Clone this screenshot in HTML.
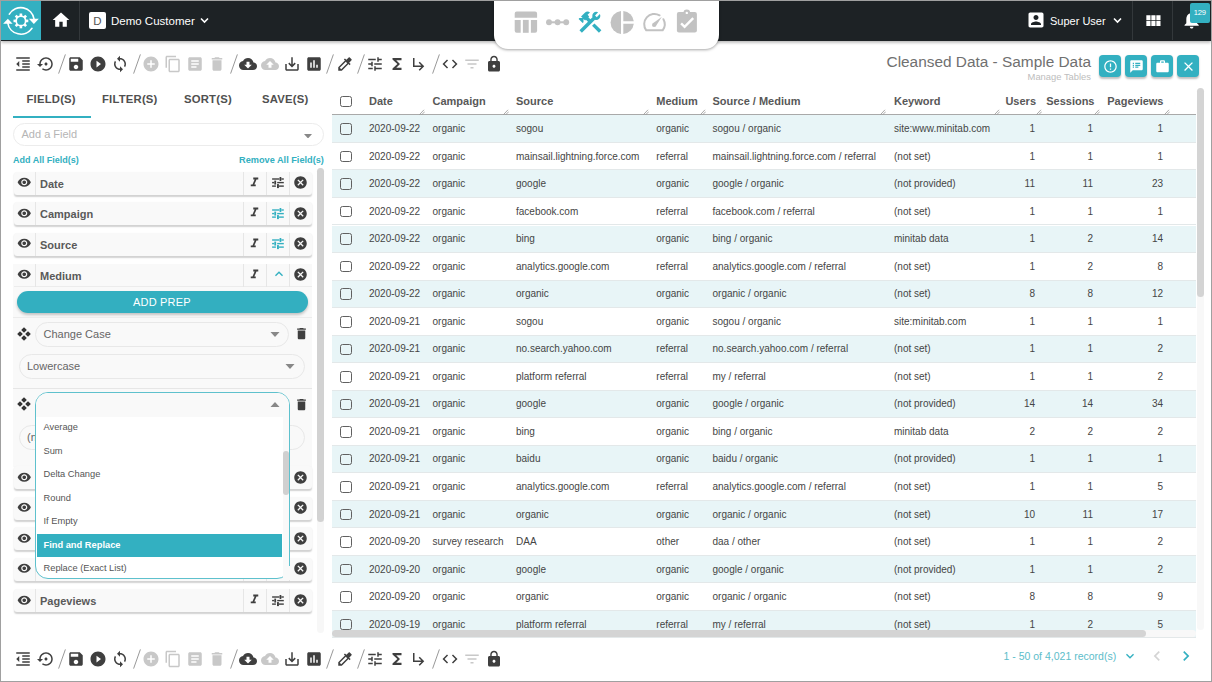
<!DOCTYPE html><html><head><meta charset="utf-8"><style>
*{box-sizing:border-box;margin:0;padding:0}
html,body{width:1212px;height:682px;overflow:hidden;background:#fff}
body{font-family:"Liberation Sans",sans-serif;position:relative;color:#444}
.frame{position:absolute;left:0;top:0;width:1212px;height:682px;border:1px solid #a0a0a0;z-index:50;pointer-events:none}
.abs{position:absolute}
.ic{position:absolute;display:block}
.slash{position:absolute;width:8px;height:20px;background:linear-gradient(to top right,transparent calc(50% - 0.6px),#8a8a8a calc(50% - 0.3px),#8a8a8a calc(50% + 0.3px),transparent calc(50% + 0.6px))}
.hdr{position:absolute;left:1px;top:1px;width:1210px;height:39.5px;background:#1d2225;box-shadow:0 1.5px 3px rgba(0,0,0,0.3)}
.txt{position:absolute;white-space:nowrap;line-height:1}
.row{position:absolute;left:332px;width:864px;height:27.5px;border-bottom:1px solid #e3e8e9}
.row.s{background:#e8f5f7}
.cb{position:absolute;left:340px;width:11.5px;height:11.5px;border:1.8px solid #606060;border-radius:2.5px}
.cell{position:absolute;white-space:nowrap;font-size:10px;color:#454545;line-height:1}
.hcell{position:absolute;white-space:nowrap;font-size:11px;font-weight:bold;color:#585858;line-height:1;top:96px}
.handle{position:absolute;top:109px;width:5px;height:5px;background:linear-gradient(to top right,transparent 35%,#999 40%,transparent 50%,transparent 60%,#999 65%,transparent 72%)}
.card{position:absolute;left:14px;width:297.5px;height:23px;background:#f9f9f9;border-radius:3px;box-shadow:0 1.5px 1.5px rgba(0,0,0,0.18)}
.vd{position:absolute;top:0;width:1px;height:23px;background:#e6e6e6}
.fname{position:absolute;left:26px;top:7px;font-size:11px;font-weight:bold;color:#5a5a5a;line-height:1;white-space:nowrap}
.tbtn{position:absolute;top:55px;width:22px;height:22px;background:#33b0c1;border-radius:4px;box-shadow:0 1.5px 2px rgba(0,0,0,0.25)}
.sel{position:absolute;border:1px solid #e8e8e8;border-radius:13px;background:#f9f9f9}
.dd{position:absolute;font-size:9.3px;color:#555;white-space:nowrap;line-height:1}
</style></head><body>
<div class="frame"></div>
<div class="hdr"></div><div class="abs" style="left:1px;top:1px;width:40px;height:39px;background:#33b0c1"></div><svg class="ic" style="left:0px;top:0px;width:40px;height:40px" viewBox="0 0 40 40">
<g fill="none" stroke="#fff" stroke-width="1.6" stroke-linecap="round">
<path d="M9.34 14.2 A13.35 13.35 0 0 1 34.05 19"/>
<path d="M32.0 28.3 A13.35 13.35 0 0 1 7.75 22.8"/>
</g>
<path fill="#fff" d="M28.9 18.8 L38.8 18.8 L33.85 24 Z"/>
<path fill="#fff" d="M3.1 23.7 L12.6 23.7 L7.85 18.8 Z"/>
<g transform="translate(20.9 20.9)" fill="#fff">
<circle r="5.6"/>
<g id="t"><rect x="-1.3" y="-7.4" width="2.6" height="3"/></g>
<rect x="-1.3" y="-7.4" width="2.6" height="3" transform="rotate(45)"/>
<rect x="-1.3" y="-7.4" width="2.6" height="3" transform="rotate(90)"/>
<rect x="-1.3" y="-7.4" width="2.6" height="3" transform="rotate(135)"/>
<rect x="-1.3" y="-7.4" width="2.6" height="3" transform="rotate(180)"/>
<rect x="-1.3" y="-7.4" width="2.6" height="3" transform="rotate(225)"/>
<rect x="-1.3" y="-7.4" width="2.6" height="3" transform="rotate(270)"/>
<rect x="-1.3" y="-7.4" width="2.6" height="3" transform="rotate(315)"/>
<circle r="3.9" fill="#33b0c1"/>
</g></svg><svg class="ic" style="left:50.6px;top:10px;width:20px;height:20px" viewBox="0 0 24 24"><path fill="#fff" d="M10 20v-6h4v6h5v-8h3L12 3 2 12h3v8z"/></svg><div class="abs" style="left:79px;top:1px;width:1px;height:39px;background:#33383b"></div><div class="abs" style="left:89px;top:12px;width:17px;height:17px;background:#fff;border-radius:2px"></div><div class="txt" style="left:93.3px;top:15.6px;font-size:11.5px;color:#555">D</div><div class="txt" style="left:111px;top:15.6px;font-size:11.5px;color:#fff">Demo Customer</div><svg class="ic" style="left:200px;top:17px;width:9px;height:7px" viewBox="0 0 9 7"><path d="M1 1.5 L4.5 5 L8 1.5" fill="none" stroke="#fff" stroke-width="1.6"/></svg><div class="abs" style="left:493.8px;top:0px;width:225px;height:48.6px;background:#fff;border-radius:0 0 14px 14px;box-shadow:0 1px 3px rgba(0,0,0,0.35)"></div><svg class="ic" style="left:494px;top:0;width:224px;height:48px" viewBox="0 0 224 48">
<g fill="#c2c2c2">
<path d="M20.7 13.5 a2 2 0 0 1 2 -2 h18.4 a2 2 0 0 1 2 2 v4.3 h-22.4z"/>
<path d="M20.7 19.9 h6 v12.9 h-4 a2 2 0 0 1 -2 -2z"/>
<rect x="28.9" y="19.9" width="5.8" height="12.9"/>
<path d="M36.9 19.9 h6.2 v10.9 a2 2 0 0 1 -2 2 h-4.2z"/>
<circle cx="55" cy="22.3" r="2.95"/><circle cx="63.6" cy="22.3" r="2.95"/><circle cx="72.2" cy="22.3" r="2.95"/>
<rect x="55" y="21.3" width="17" height="2"/>
<path d="M127 11.1 v22.9 a11.5 11.5 0 0 1 0 -22.9z"/>
<path d="M129.3 11.1 a11.5 11.5 0 0 1 10.5 10.2 h-10.5z"/>
<path d="M129.3 23.8 h10.5 a11.5 11.5 0 0 1 -10.5 10.2z"/>
<path d="M184.9 11.9 h16 a2 2 0 0 1 2 2 v16.6 a2 2 0 0 1 -2 2 h-16 a2 2 0 0 1 -2 -2 v-16.6 a2 2 0 0 1 2 -2z"/>
<circle cx="192.8" cy="12.9" r="3.3"/>
<path d="M158.6 23.6 L167.9 16.8 L161.6 26.4 z"/>
<circle cx="160.1" cy="25" r="2.1"/>
</g>
<circle cx="192.8" cy="12.9" r="1.2" fill="#fff"/>
<path d="M187.1 23.3 L190.6 26.8 L199.2 18.1" fill="none" stroke="#fff" stroke-width="2.4"/>
<path d="M165.575 15.27 A10.25 10.25 0 0 0 152.25 30.3 L168.65 30.3 A10.25 10.25 0 0 0 169.41 19.18" fill="none" stroke="#c2c2c2" stroke-width="2" stroke-linecap="round" stroke-linejoin="round"/>
<g transform="translate(82.185 8.41) scale(1.15)"><path fill="#33b0c1" d="M13.78 15.17l2.12-2.12 6.01 6.01-2.12 2.12zM17.5 10c1.93 0 3.5-1.57 3.5-3.5 0-.58-.16-1.12-.41-1.6l-2.7 2.7-1.49-1.49 2.7-2.7c-.48-.25-1.02-.41-1.6-.41C15.57 3 14 4.57 14 6.5c0 .41.08.8.21 1.16l-1.85 1.85-1.78-1.78.71-.71-1.41-1.41L12 3.49c-1.17-1.17-3.07-1.17-4.24 0L4.22 7.03l1.41 1.41H2.81l-.71.71 3.54 3.54.71-.71V9.15l1.41 1.41.71-.71 1.78 1.78-7.41 7.41 2.12 2.12L16.34 9.79c.36.13.75.21 1.16.21z"/></g>
</svg><svg class="ic" style="left:1026.1px;top:10.4px;width:20px;height:20px" viewBox="0 0 24 24"><path fill="#fff" d="M3 5v14c0 1.1.89 2 2 2h14c1.1 0 2-.9 2-2V5c0-1.1-.9-2-2-2H5c-1.11 0-2 .9-2 2zm12 4c0 1.66-1.34 3-3 3s-3-1.34-3-3 1.34-3 3-3 3 1.34 3 3zm-9 8c0-2 4-3.1 6-3.1s6 1.1 6 3.1v1H6v-1z"/></svg><div class="txt" style="left:1050px;top:15.5px;font-size:11px;color:#fff">Super User</div><svg class="ic" style="left:1113px;top:17px;width:9px;height:7px" viewBox="0 0 9 7"><path d="M1 1.5 L4.5 5 L8 1.5" fill="none" stroke="#fff" stroke-width="1.6"/></svg><div class="abs" style="left:1132px;top:1px;width:1px;height:39px;background:#33383b"></div><svg class="ic" style="left:1142.7px;top:10.8px;width:20px;height:20px" viewBox="0 0 24 24"><path fill="#fff" d="M4 11h5V5H4v6zm0 7h5v-6H4v6zm6 0h5v-6h-5v6zm6 0h5v-6h-5v6zm-6-7h5V5h-5v6zm6-6v6h5V5h-5z"/></svg><div class="abs" style="left:1172px;top:1px;width:1px;height:39px;background:#33383b"></div><svg class="ic" style="left:1181.25px;top:9px;width:21.3px;height:21.3px" viewBox="0 0 24 24"><path fill="#fff" d="M12 22c1.1 0 2-.9 2-2h-4c0 1.1.89 2 2 2zm6-6v-5c0-3.07-1.64-5.64-4.5-6.32V4c0-.83-.67-1.5-1.5-1.5s-1.5.67-1.5 1.5v.68C7.63 5.36 6 7.92 6 11v5l-2 2v1h16v-1l-2-2z"/></svg><div class="abs" style="left:1189.5px;top:3px;width:20.5px;height:19.5px;background:#33b0c1;border-radius:2px"></div><div class="txt" style="left:1193.8px;top:9.3px;font-size:7.6px;color:#fff;letter-spacing:-0.2px">129</div><svg class="ic" style="left:14px;top:55px;width:18px;height:18px" viewBox="0 0 24 24"><path fill="#3f3f3f" d="M11 17h10v-2H11v2zm-8-5l4 4V8l-4 4zm0 9h18v-2H3v2zM3 3v2h18V3H3zm8 6h10V7H11v2zm0 4h10v-2H11v2z"/></svg><svg class="ic" style="left:36.5px;top:55px;width:18px;height:18px" viewBox="0 0 24 24"><path fill="#3f3f3f" d="M14 12c0-1.1-.9-2-2-2s-2 .9-2 2 .9 2 2 2 2-.9 2-2zm-2-9c-4.97 0-9 4.03-9 9H0l4 4 4-4H5c0-3.87 3.13-7 7-7s7 3.13 7 7-3.13 7-7 7c-1.51 0-2.91-.49-4.06-1.3l-1.42 1.44C8.04 20.3 9.94 21 12 21c4.97 0 9-4.03 9-9s-4.03-9-9-9z"/></svg><svg class="ic" style="left:57.5px;top:54px;width:8px;height:20px" viewBox="0 0 8 20"><path d="M0.6 19.6 L7.4 0.4" stroke="#8c8c8c" stroke-width="0.9" fill="none"/></svg><svg class="ic" style="left:67px;top:55px;width:18px;height:18px" viewBox="0 0 24 24"><path fill="#3f3f3f" d="M17 3H5c-1.11 0-2 .9-2 2v14c0 1.1.89 2 2 2h14c1.1 0 2-.9 2-2V7l-4-4zm-5 16c-1.66 0-3-1.34-3-3s1.34-3 3-3 3 1.34 3 3-1.34 3-3 3zm3-10H5V5h10v4z"/></svg><svg class="ic" style="left:88.5px;top:55px;width:18px;height:18px" viewBox="0 0 24 24"><path fill="#3f3f3f" d="M12 2C6.48 2 2 6.48 2 12s4.48 10 10 10 10-4.48 10-10S17.52 2 12 2zm-2 14.5v-9l6 4.5-6 4.5z"/></svg><svg class="ic" style="left:111px;top:55px;width:18px;height:18px" viewBox="0 0 24 24"><path fill="#3f3f3f" d="M12 4V1L8 5l4 4V6c3.31 0 6 2.69 6 6 0 1.01-.25 1.97-.7 2.8l1.46 1.46C19.54 15.03 20 13.57 20 12c0-4.42-3.58-8-8-8zm0 14c-3.31 0-6-2.69-6-6 0-1.01.25-1.97.7-2.8L5.24 7.74C4.46 8.97 4 10.43 4 12c0 4.42 3.58 8 8 8v3l4-4-4-4v3z"/></svg><svg class="ic" style="left:132.5px;top:54px;width:8px;height:20px" viewBox="0 0 8 20"><path d="M0.6 19.6 L7.4 0.4" stroke="#8c8c8c" stroke-width="0.9" fill="none"/></svg><svg class="ic" style="left:142px;top:55px;width:18px;height:18px" viewBox="0 0 24 24"><path fill="#c8c8c8" d="M12 2C6.48 2 2 6.48 2 12s4.48 10 10 10 10-4.48 10-10S17.52 2 12 2zm5 11h-4v4h-2v-4H7v-2h4V7h2v4h4v2z"/></svg><svg class="ic" style="left:164px;top:55px;width:18px;height:18px" viewBox="0 0 24 24"><path fill="#c8c8c8" d="M16 1H4c-1.1 0-2 .9-2 2v14h2V3h12V1zm3 4H8c-1.1 0-2 .9-2 2v14c0 1.1.9 2 2 2h11c1.1 0 2-.9 2-2V7c0-1.1-.9-2-2-2zm0 16H8V7h11v14z"/></svg><svg class="ic" style="left:186px;top:55px;width:18px;height:18px" viewBox="0 0 24 24"><path fill="#c8c8c8" d="M19 3H5c-1.1 0-2 .9-2 2v14c0 1.1.9 2 2 2h14c1.1 0 2-.9 2-2V5c0-1.1-.9-2-2-2zm-5 14H7v-2h7v2zm3-4H7v-2h10v2zm0-4H7V7h10v2z"/></svg><svg class="ic" style="left:208px;top:55px;width:18px;height:18px" viewBox="0 0 24 24"><path fill="#c8c8c8" d="M6 19c0 1.1.9 2 2 2h8c1.1 0 2-.9 2-2V7H6v12zM19 4h-3.5l-1-1h-5l-1 1H5v2h14V4z"/></svg><svg class="ic" style="left:229.5px;top:54px;width:8px;height:20px" viewBox="0 0 8 20"><path d="M0.6 19.6 L7.4 0.4" stroke="#8c8c8c" stroke-width="0.9" fill="none"/></svg><svg class="ic" style="left:239px;top:55px;width:18px;height:18px" viewBox="0 0 24 24"><path fill="#3f3f3f" d="M19.35 10.04C18.67 6.59 15.64 4 12 4 9.11 4 6.6 5.64 5.35 8.04 2.34 8.36 0 10.91 0 14c0 3.31 2.69 6 6 6h13c2.76 0 5-2.24 5-5 0-2.64-2.05-4.78-4.65-4.96zM17 13l-5 5-5-5h3V9h4v4h3z"/></svg><svg class="ic" style="left:261px;top:55px;width:18px;height:18px" viewBox="0 0 24 24"><path fill="#c8c8c8" d="M19.35 10.04C18.67 6.59 15.64 4 12 4 9.11 4 6.6 5.64 5.35 8.04 2.34 8.36 0 10.91 0 14c0 3.31 2.69 6 6 6h13c2.76 0 5-2.24 5-5 0-2.64-2.05-4.78-4.65-4.96zM14 13v4h-4v-4H7l5-5 5 5h-3z"/></svg><svg class="ic" style="left:283px;top:55px;width:18px;height:18px" viewBox="0 0 24 24"><path fill="#3f3f3f" d="M19 12v7H5v-7H3v7c0 1.1.9 2 2 2h14c1.1 0 2-.9 2-2v-7h-2zm-6 .67l2.59-2.58L17 11.5l-5 5-5-5 1.41-1.41L11 12.67V3h2z"/></svg><svg class="ic" style="left:305px;top:55px;width:18px;height:18px" viewBox="0 0 24 24"><path fill="#3f3f3f" d="M19 3H5c-1.1 0-2 .9-2 2v14c0 1.1.9 2 2 2h14c1.1 0 2-.9 2-2V5c0-1.1-.9-2-2-2zM9 17H7v-7h2v7zm4 0h-2V7h2v10zm4 0h-2v-4h2v4z"/></svg><svg class="ic" style="left:326px;top:54px;width:8px;height:20px" viewBox="0 0 8 20"><path d="M0.6 19.6 L7.4 0.4" stroke="#8c8c8c" stroke-width="0.9" fill="none"/></svg><svg class="ic" style="left:336px;top:55px;width:18px;height:18px" viewBox="0 0 24 24"><path fill="#3f3f3f" d="M20.71 5.63l-2.34-2.34c-.39-.39-1.02-.39-1.41 0l-3.12 3.12-1.93-1.91-1.41 1.41 1.42 1.420L3 16.25V21h4.75l8.92-8.92 1.42 1.42 1.41-1.41-1.92-1.92 3.12-3.12c.4-.4.4-1.03.01-1.42zM6.92 19L5 17.08l8.06-8.06 1.92 1.92L6.92 19z"/></svg><svg class="ic" style="left:356.5px;top:54px;width:8px;height:20px" viewBox="0 0 8 20"><path d="M0.6 19.6 L7.4 0.4" stroke="#8c8c8c" stroke-width="0.9" fill="none"/></svg><svg class="ic" style="left:366px;top:55px;width:18px;height:18px" viewBox="0 0 24 24"><path fill="#3f3f3f" d="M3 17v2h6v-2H3zM3 5v2h10V5H3zm10 16v-2h8v-2h-8v-2h-2v6h2zM7 9v2H3v2h4v2h2V9H7zm14 4v-2H11v2h10zm-6-4h2V7h4V5h-4V3h-2v6z"/></svg><svg class="ic" style="left:388px;top:55px;width:18px;height:18px" viewBox="0 0 24 24"><path fill="#3f3f3f" d="M18 4H6v2l6.5 6L6 18v2h12v-3h-7l5-5-5-5h7z"/></svg><svg class="ic" style="left:410px;top:55px;width:18px;height:18px" viewBox="0 0 24 24"><path fill="#3f3f3f" d="M19 15l-6 6-1.42-1.42L15.17 16H4V4h2v10h9.17l-3.59-3.58L13 9l6 6z"/></svg><svg class="ic" style="left:432px;top:54px;width:8px;height:20px" viewBox="0 0 8 20"><path d="M0.6 19.6 L7.4 0.4" stroke="#8c8c8c" stroke-width="0.9" fill="none"/></svg><svg class="ic" style="left:441px;top:55px;width:18px;height:18px" viewBox="0 0 24 24"><path fill="#3f3f3f" d="M9.4 16.6L4.8 12l4.6-4.6L8 6l-6 6 6 6 1.4-1.4zm5.2 0l4.6-4.6-4.6-4.6L16 6l6 6-6 6-1.4-1.4z"/></svg><svg class="ic" style="left:463px;top:55px;width:18px;height:18px" viewBox="0 0 24 24"><path fill="#c8c8c8" d="M10 18h4v-2h-4v2zM3 6v2h18V6H3zm3 7h12v-2H6v2z"/></svg><svg class="ic" style="left:485px;top:55px;width:18px;height:18px" viewBox="0 0 24 24"><path fill="#3f3f3f" d="M18 8h-1V6c0-2.76-2.24-5-5-5S7 3.24 7 6v2H6c-1.1 0-2 .9-2 2v10c0 1.1.9 2 2 2h12c1.1 0 2-.9 2-2V10c0-1.1-.9-2-2-2zm-6 9c-1.1 0-2-.9-2-2s.9-2 2-2 2 .9 2 2-.9 2-2 2zm3.1-9H8.9V6c0-1.71 1.39-3.1 3.1-3.1 1.71 0 3.1 1.39 3.1 3.1v2z"/></svg><svg class="ic" style="left:14px;top:649.5px;width:18px;height:18px" viewBox="0 0 24 24"><path fill="#3f3f3f" d="M11 17h10v-2H11v2zm-8-5l4 4V8l-4 4zm0 9h18v-2H3v2zM3 3v2h18V3H3zm8 6h10V7H11v2zm0 4h10v-2H11v2z"/></svg><svg class="ic" style="left:36.5px;top:649.5px;width:18px;height:18px" viewBox="0 0 24 24"><path fill="#3f3f3f" d="M14 12c0-1.1-.9-2-2-2s-2 .9-2 2 .9 2 2 2 2-.9 2-2zm-2-9c-4.97 0-9 4.03-9 9H0l4 4 4-4H5c0-3.87 3.13-7 7-7s7 3.13 7 7-3.13 7-7 7c-1.51 0-2.91-.49-4.06-1.3l-1.42 1.44C8.04 20.3 9.94 21 12 21c4.97 0 9-4.03 9-9s-4.03-9-9-9z"/></svg><svg class="ic" style="left:57.5px;top:648.5px;width:8px;height:20px" viewBox="0 0 8 20"><path d="M0.6 19.6 L7.4 0.4" stroke="#8c8c8c" stroke-width="0.9" fill="none"/></svg><svg class="ic" style="left:67px;top:649.5px;width:18px;height:18px" viewBox="0 0 24 24"><path fill="#3f3f3f" d="M17 3H5c-1.11 0-2 .9-2 2v14c0 1.1.89 2 2 2h14c1.1 0 2-.9 2-2V7l-4-4zm-5 16c-1.66 0-3-1.34-3-3s1.34-3 3-3 3 1.34 3 3-1.34 3-3 3zm3-10H5V5h10v4z"/></svg><svg class="ic" style="left:88.5px;top:649.5px;width:18px;height:18px" viewBox="0 0 24 24"><path fill="#3f3f3f" d="M12 2C6.48 2 2 6.48 2 12s4.48 10 10 10 10-4.48 10-10S17.52 2 12 2zm-2 14.5v-9l6 4.5-6 4.5z"/></svg><svg class="ic" style="left:111px;top:649.5px;width:18px;height:18px" viewBox="0 0 24 24"><path fill="#3f3f3f" d="M12 4V1L8 5l4 4V6c3.31 0 6 2.69 6 6 0 1.01-.25 1.97-.7 2.8l1.46 1.46C19.54 15.03 20 13.57 20 12c0-4.42-3.58-8-8-8zm0 14c-3.31 0-6-2.69-6-6 0-1.01.25-1.97.7-2.8L5.24 7.74C4.46 8.97 4 10.43 4 12c0 4.42 3.58 8 8 8v3l4-4-4-4v3z"/></svg><svg class="ic" style="left:132.5px;top:648.5px;width:8px;height:20px" viewBox="0 0 8 20"><path d="M0.6 19.6 L7.4 0.4" stroke="#8c8c8c" stroke-width="0.9" fill="none"/></svg><svg class="ic" style="left:142px;top:649.5px;width:18px;height:18px" viewBox="0 0 24 24"><path fill="#c8c8c8" d="M12 2C6.48 2 2 6.48 2 12s4.48 10 10 10 10-4.48 10-10S17.52 2 12 2zm5 11h-4v4h-2v-4H7v-2h4V7h2v4h4v2z"/></svg><svg class="ic" style="left:164px;top:649.5px;width:18px;height:18px" viewBox="0 0 24 24"><path fill="#c8c8c8" d="M16 1H4c-1.1 0-2 .9-2 2v14h2V3h12V1zm3 4H8c-1.1 0-2 .9-2 2v14c0 1.1.9 2 2 2h11c1.1 0 2-.9 2-2V7c0-1.1-.9-2-2-2zm0 16H8V7h11v14z"/></svg><svg class="ic" style="left:186px;top:649.5px;width:18px;height:18px" viewBox="0 0 24 24"><path fill="#c8c8c8" d="M19 3H5c-1.1 0-2 .9-2 2v14c0 1.1.9 2 2 2h14c1.1 0 2-.9 2-2V5c0-1.1-.9-2-2-2zm-5 14H7v-2h7v2zm3-4H7v-2h10v2zm0-4H7V7h10v2z"/></svg><svg class="ic" style="left:208px;top:649.5px;width:18px;height:18px" viewBox="0 0 24 24"><path fill="#c8c8c8" d="M6 19c0 1.1.9 2 2 2h8c1.1 0 2-.9 2-2V7H6v12zM19 4h-3.5l-1-1h-5l-1 1H5v2h14V4z"/></svg><svg class="ic" style="left:229.5px;top:648.5px;width:8px;height:20px" viewBox="0 0 8 20"><path d="M0.6 19.6 L7.4 0.4" stroke="#8c8c8c" stroke-width="0.9" fill="none"/></svg><svg class="ic" style="left:239px;top:649.5px;width:18px;height:18px" viewBox="0 0 24 24"><path fill="#3f3f3f" d="M19.35 10.04C18.67 6.59 15.64 4 12 4 9.11 4 6.6 5.64 5.35 8.04 2.34 8.36 0 10.91 0 14c0 3.31 2.69 6 6 6h13c2.76 0 5-2.24 5-5 0-2.64-2.05-4.78-4.65-4.96zM17 13l-5 5-5-5h3V9h4v4h3z"/></svg><svg class="ic" style="left:261px;top:649.5px;width:18px;height:18px" viewBox="0 0 24 24"><path fill="#c8c8c8" d="M19.35 10.04C18.67 6.59 15.64 4 12 4 9.11 4 6.6 5.64 5.35 8.04 2.34 8.36 0 10.91 0 14c0 3.31 2.69 6 6 6h13c2.76 0 5-2.24 5-5 0-2.64-2.05-4.78-4.65-4.96zM14 13v4h-4v-4H7l5-5 5 5h-3z"/></svg><svg class="ic" style="left:283px;top:649.5px;width:18px;height:18px" viewBox="0 0 24 24"><path fill="#3f3f3f" d="M19 12v7H5v-7H3v7c0 1.1.9 2 2 2h14c1.1 0 2-.9 2-2v-7h-2zm-6 .67l2.59-2.58L17 11.5l-5 5-5-5 1.41-1.41L11 12.67V3h2z"/></svg><svg class="ic" style="left:305px;top:649.5px;width:18px;height:18px" viewBox="0 0 24 24"><path fill="#3f3f3f" d="M19 3H5c-1.1 0-2 .9-2 2v14c0 1.1.9 2 2 2h14c1.1 0 2-.9 2-2V5c0-1.1-.9-2-2-2zM9 17H7v-7h2v7zm4 0h-2V7h2v10zm4 0h-2v-4h2v4z"/></svg><svg class="ic" style="left:326px;top:648.5px;width:8px;height:20px" viewBox="0 0 8 20"><path d="M0.6 19.6 L7.4 0.4" stroke="#8c8c8c" stroke-width="0.9" fill="none"/></svg><svg class="ic" style="left:336px;top:649.5px;width:18px;height:18px" viewBox="0 0 24 24"><path fill="#3f3f3f" d="M20.71 5.63l-2.34-2.34c-.39-.39-1.02-.39-1.41 0l-3.12 3.12-1.93-1.91-1.41 1.41 1.42 1.420L3 16.25V21h4.75l8.92-8.92 1.42 1.42 1.41-1.41-1.92-1.92 3.12-3.12c.4-.4.4-1.03.01-1.42zM6.92 19L5 17.08l8.06-8.06 1.92 1.92L6.92 19z"/></svg><svg class="ic" style="left:356.5px;top:648.5px;width:8px;height:20px" viewBox="0 0 8 20"><path d="M0.6 19.6 L7.4 0.4" stroke="#8c8c8c" stroke-width="0.9" fill="none"/></svg><svg class="ic" style="left:366px;top:649.5px;width:18px;height:18px" viewBox="0 0 24 24"><path fill="#3f3f3f" d="M3 17v2h6v-2H3zM3 5v2h10V5H3zm10 16v-2h8v-2h-8v-2h-2v6h2zM7 9v2H3v2h4v2h2V9H7zm14 4v-2H11v2h10zm-6-4h2V7h4V5h-4V3h-2v6z"/></svg><svg class="ic" style="left:388px;top:649.5px;width:18px;height:18px" viewBox="0 0 24 24"><path fill="#3f3f3f" d="M18 4H6v2l6.5 6L6 18v2h12v-3h-7l5-5-5-5h7z"/></svg><svg class="ic" style="left:410px;top:649.5px;width:18px;height:18px" viewBox="0 0 24 24"><path fill="#3f3f3f" d="M19 15l-6 6-1.42-1.42L15.17 16H4V4h2v10h9.17l-3.59-3.58L13 9l6 6z"/></svg><svg class="ic" style="left:432px;top:648.5px;width:8px;height:20px" viewBox="0 0 8 20"><path d="M0.6 19.6 L7.4 0.4" stroke="#8c8c8c" stroke-width="0.9" fill="none"/></svg><svg class="ic" style="left:441px;top:649.5px;width:18px;height:18px" viewBox="0 0 24 24"><path fill="#3f3f3f" d="M9.4 16.6L4.8 12l4.6-4.6L8 6l-6 6 6 6 1.4-1.4zm5.2 0l4.6-4.6-4.6-4.6L16 6l6 6-6 6-1.4-1.4z"/></svg><svg class="ic" style="left:463px;top:649.5px;width:18px;height:18px" viewBox="0 0 24 24"><path fill="#c8c8c8" d="M10 18h4v-2h-4v2zM3 6v2h18V6H3zm3 7h12v-2H6v2z"/></svg><svg class="ic" style="left:485px;top:649.5px;width:18px;height:18px" viewBox="0 0 24 24"><path fill="#3f3f3f" d="M18 8h-1V6c0-2.76-2.24-5-5-5S7 3.24 7 6v2H6c-1.1 0-2 .9-2 2v10c0 1.1.9 2 2 2h12c1.1 0 2-.9 2-2V10c0-1.1-.9-2-2-2zm-6 9c-1.1 0-2-.9-2-2s.9-2 2-2 2 .9 2 2-.9 2-2 2zm3.1-9H8.9V6c0-1.71 1.39-3.1 3.1-3.1 1.71 0 3.1 1.39 3.1 3.1v2z"/></svg><div class="txt" style="right:121px;top:54px;font-size:15.4px;color:#707070">Cleansed Data - Sample Data</div><div class="txt" style="right:121px;top:72px;font-size:9.4px;color:#bdbdbd">Manage Tables</div><div class="tbtn" style="left:1099.2px"></div><svg class="ic" style="left:1102.7px;top:58.5px;width:15px;height:15px" viewBox="0 0 24 24"><path fill="#fff" d="M11 15h2v2h-2zm0-8h2v6h-2zm.99-5C6.47 2 2 6.48 2 12s4.47 10 9.99 10C17.52 22 22 17.52 22 12S17.52 2 11.99 2zM12 20c-4.42 0-8-3.58-8-8s3.58-8 8-8 8 3.58 8 8-3.58 8-8 8z"/></svg><div class="tbtn" style="left:1125.15px"></div><svg class="ic" style="left:1128.65px;top:58.5px;width:15px;height:15px" viewBox="0 0 24 24"><path fill="#fff" d="M20 2H4c-1.1 0-1.99.9-1.99 2L2 22l4-4h14c1.1 0 2-.9 2-2V4c0-1.1-.9-2-2-2zM8 14H6v-2h2v2zm0-3H6V9h2v2zm0-3H6V6h2v2zm7 6h-5v-2h5v2zm3-3h-8V9h8v2zm0-3h-8V6h8v2z"/></svg><div class="tbtn" style="left:1151.1000000000001px"></div><svg class="ic" style="left:1154.6000000000001px;top:58.5px;width:15px;height:15px" viewBox="0 0 24 24"><path fill="#fff" d="M20 6h-4V4c0-1.11-.89-2-2-2h-4c-1.11 0-2 .89-2 2v2H4c-1.11 0-1.99.89-1.99 2L2 19c0 1.11.89 2 2 2h16c1.11 0 2-.89 2-2V8c0-1.11-.89-2-2-2zm-6 0h-4V4h4v2z"/></svg><div class="tbtn" style="left:1177.05px"></div><svg class="ic" style="left:1180.55px;top:58.5px;width:15px;height:15px" viewBox="0 0 24 24"><path fill="#fff" d="M19 6.41L17.59 5 12 10.59 6.41 5 5 6.41 10.59 12 5 17.59 6.41 19 12 13.41 17.59 19 19 17.59 13.41 12z"/></svg><div class="txt" style="left:26.5px;top:94px;font-size:11.3px;font-weight:bold;color:#505050;letter-spacing:0.2px">FIELD(S)</div><div class="txt" style="left:102px;top:94px;font-size:11.3px;font-weight:bold;color:#505050;letter-spacing:0.2px">FILTER(S)</div><div class="txt" style="left:184px;top:94px;font-size:11.3px;font-weight:bold;color:#505050;letter-spacing:0.2px">SORT(S)</div><div class="txt" style="left:262px;top:94px;font-size:11.3px;font-weight:bold;color:#505050;letter-spacing:0.2px">SAVE(S)</div><div class="abs" style="left:13px;top:115.5px;width:78px;height:2px;background:#33b0c1"></div><div class="abs" style="left:13px;top:123px;width:310.5px;height:23px;border:1px solid #ececec;border-radius:12px;background:#fff"></div><div class="txt" style="left:21.5px;top:129px;font-size:11px;color:#b5b5b5">Add a Field</div><svg class="ic" style="left:303.5px;top:133.8px;width:8px;height:4.5px" viewBox="0 0 8 4.5"><path d="M0 0h8l-4 4.5z" fill="#888"/></svg><div class="txt" style="left:13px;top:155.5px;font-size:9px;font-weight:bold;color:#33b0c1">Add All Field(s)</div><div class="txt" style="left:239px;top:155.5px;font-size:9.2px;font-weight:bold;color:#33b0c1">Remove All Field(s)</div><div class="abs" style="left:317px;top:168px;width:7px;height:465px;background:#f7f7f7;border-radius:3.5px"></div><div class="abs" style="left:317px;top:168px;width:7px;height:354px;background:#d2d2d2;border-radius:3.5px"></div><div class="card" style="top:171.5px"><div class="vd" style="left:21px"></div><div class="vd" style="left:229px"></div><div class="vd" style="left:252px"></div><div class="vd" style="left:275px"></div><div class="fname">Date</div></div><svg class="ic" style="left:16.6px;top:175.3px;width:14.5px;height:14.5px" viewBox="0 0 24 24"><path fill="#3f3f3f" d="M12 4.5C7 4.5 2.73 7.61 1 12c1.73 4.39 6 7.5 11 7.5s9.27-3.11 11-7.5c-1.73-4.39-6-7.5-11-7.5zM12 17c-2.76 0-5-2.24-5-5s2.24-5 5-5 5 2.24 5 5-2.24 5-5 5zm0-8c-1.66 0-3 1.34-3 3s1.34 3 3 3 3-1.34 3-3-1.34-3-3-3z"/></svg><svg class="ic" style="left:247.3px;top:174.7px;width:15px;height:15px" viewBox="0 0 24 24"><path fill="#3f3f3f" d="M10 4v3h2.21l-3.42 8H6v3h8v-3h-2.21l3.42-8H18V4z"/></svg><svg class="ic" style="left:272px;top:176.0px;width:12px;height:13px" viewBox="0 0 12 13"><g fill="#3f3f3f"><rect x="0.1" y="2.3" width="7.4" height="1.4"/><rect x="7.6" y="1" width="1.7" height="4"/><rect x="9.3" y="2.3" width="2.5" height="1.4"/><rect x="0.1" y="5.9" width="2.1" height="1.4"/><rect x="2.3" y="4.6" width="1.8" height="4"/><rect x="5.2" y="5.9" width="6.6" height="1.4"/><rect x="0.1" y="9.4" width="3.8" height="1.4"/><rect x="5" y="8.1" width="1.9" height="4"/><rect x="6.9" y="9.4" width="4.9" height="1.4"/></g></svg><svg class="ic" style="left:293.45px;top:175.35px;width:15px;height:15px" viewBox="0 0 24 24"><path fill="#3f3f3f" d="M12 2C6.47 2 2 6.47 2 12s4.47 10 10 10 10-4.47 10-10S17.53 2 12 2zm5 13.59L15.59 17 12 13.41 8.41 17 7 15.59 10.59 12 7 8.41 8.41 7 12 10.59 15.59 7 17 8.41 13.41 12 17 15.59z"/></svg><div class="card" style="top:202px"><div class="vd" style="left:21px"></div><div class="vd" style="left:229px"></div><div class="vd" style="left:252px"></div><div class="vd" style="left:275px"></div><div class="fname">Campaign</div></div><svg class="ic" style="left:16.6px;top:205.8px;width:14.5px;height:14.5px" viewBox="0 0 24 24"><path fill="#3f3f3f" d="M12 4.5C7 4.5 2.73 7.61 1 12c1.73 4.39 6 7.5 11 7.5s9.27-3.11 11-7.5c-1.73-4.39-6-7.5-11-7.5zM12 17c-2.76 0-5-2.24-5-5s2.24-5 5-5 5 2.24 5 5-2.24 5-5 5zm0-8c-1.66 0-3 1.34-3 3s1.34 3 3 3 3-1.34 3-3-1.34-3-3-3z"/></svg><svg class="ic" style="left:247.3px;top:205.2px;width:15px;height:15px" viewBox="0 0 24 24"><path fill="#3f3f3f" d="M10 4v3h2.21l-3.42 8H6v3h8v-3h-2.21l3.42-8H18V4z"/></svg><svg class="ic" style="left:272px;top:206.5px;width:12px;height:13px" viewBox="0 0 12 13"><g fill="#33b0c1"><rect x="0.1" y="2.3" width="7.4" height="1.4"/><rect x="7.6" y="1" width="1.7" height="4"/><rect x="9.3" y="2.3" width="2.5" height="1.4"/><rect x="0.1" y="5.9" width="2.1" height="1.4"/><rect x="2.3" y="4.6" width="1.8" height="4"/><rect x="5.2" y="5.9" width="6.6" height="1.4"/><rect x="0.1" y="9.4" width="3.8" height="1.4"/><rect x="5" y="8.1" width="1.9" height="4"/><rect x="6.9" y="9.4" width="4.9" height="1.4"/></g></svg><svg class="ic" style="left:293.45px;top:205.85px;width:15px;height:15px" viewBox="0 0 24 24"><path fill="#3f3f3f" d="M12 2C6.47 2 2 6.47 2 12s4.47 10 10 10 10-4.47 10-10S17.53 2 12 2zm5 13.59L15.59 17 12 13.41 8.41 17 7 15.59 10.59 12 7 8.41 8.41 7 12 10.59 15.59 7 17 8.41 13.41 12 17 15.59z"/></svg><div class="card" style="top:232.5px"><div class="vd" style="left:21px"></div><div class="vd" style="left:229px"></div><div class="vd" style="left:252px"></div><div class="vd" style="left:275px"></div><div class="fname">Source</div></div><svg class="ic" style="left:16.6px;top:236.3px;width:14.5px;height:14.5px" viewBox="0 0 24 24"><path fill="#3f3f3f" d="M12 4.5C7 4.5 2.73 7.61 1 12c1.73 4.39 6 7.5 11 7.5s9.27-3.11 11-7.5c-1.73-4.39-6-7.5-11-7.5zM12 17c-2.76 0-5-2.24-5-5s2.24-5 5-5 5 2.24 5 5-2.24 5-5 5zm0-8c-1.66 0-3 1.34-3 3s1.34 3 3 3 3-1.34 3-3-1.34-3-3-3z"/></svg><svg class="ic" style="left:247.3px;top:235.7px;width:15px;height:15px" viewBox="0 0 24 24"><path fill="#3f3f3f" d="M10 4v3h2.21l-3.42 8H6v3h8v-3h-2.21l3.42-8H18V4z"/></svg><svg class="ic" style="left:272px;top:237.0px;width:12px;height:13px" viewBox="0 0 12 13"><g fill="#33b0c1"><rect x="0.1" y="2.3" width="7.4" height="1.4"/><rect x="7.6" y="1" width="1.7" height="4"/><rect x="9.3" y="2.3" width="2.5" height="1.4"/><rect x="0.1" y="5.9" width="2.1" height="1.4"/><rect x="2.3" y="4.6" width="1.8" height="4"/><rect x="5.2" y="5.9" width="6.6" height="1.4"/><rect x="0.1" y="9.4" width="3.8" height="1.4"/><rect x="5" y="8.1" width="1.9" height="4"/><rect x="6.9" y="9.4" width="4.9" height="1.4"/></g></svg><svg class="ic" style="left:293.45px;top:236.35px;width:15px;height:15px" viewBox="0 0 24 24"><path fill="#3f3f3f" d="M12 2C6.47 2 2 6.47 2 12s4.47 10 10 10 10-4.47 10-10S17.53 2 12 2zm5 13.59L15.59 17 12 13.41 8.41 17 7 15.59 10.59 12 7 8.41 8.41 7 12 10.59 15.59 7 17 8.41 13.41 12 17 15.59z"/></svg><div class="abs" style="left:13px;top:263.5px;width:299px;height:203px;background:#f9f9f9"></div><div class="card" style="top:263.5px;box-shadow:none;border-radius:3px 3px 0 0;border-bottom:1px solid #ececec;height:23.5px"><div class="vd" style="left:21px"></div><div class="vd" style="left:229px"></div><div class="vd" style="left:252px"></div><div class="vd" style="left:275px"></div><div class="fname">Medium</div></div><svg class="ic" style="left:16.6px;top:267.3px;width:14.5px;height:14.5px" viewBox="0 0 24 24"><path fill="#3f3f3f" d="M12 4.5C7 4.5 2.73 7.61 1 12c1.73 4.39 6 7.5 11 7.5s9.27-3.11 11-7.5c-1.73-4.39-6-7.5-11-7.5zM12 17c-2.76 0-5-2.24-5-5s2.24-5 5-5 5 2.24 5 5-2.24 5-5 5zm0-8c-1.66 0-3 1.34-3 3s1.34 3 3 3 3-1.34 3-3-1.34-3-3-3z"/></svg><svg class="ic" style="left:247.3px;top:266.7px;width:15px;height:15px" viewBox="0 0 24 24"><path fill="#3f3f3f" d="M10 4v3h2.21l-3.42 8H6v3h8v-3h-2.21l3.42-8H18V4z"/></svg><svg class="ic" style="left:270.5px;top:266.0px;width:16px;height:16px" viewBox="0 0 24 24"><path fill="#33b0c1" d="M12 8l-6 6 1.41 1.41L12 10.83l4.59 4.58L18 14z"/></svg><svg class="ic" style="left:293.45px;top:267.35px;width:15px;height:15px" viewBox="0 0 24 24"><path fill="#3f3f3f" d="M12 2C6.47 2 2 6.47 2 12s4.47 10 10 10 10-4.47 10-10S17.53 2 12 2zm5 13.59L15.59 17 12 13.41 8.41 17 7 15.59 10.59 12 7 8.41 8.41 7 12 10.59 15.59 7 17 8.41 13.41 12 17 15.59z"/></svg><div class="abs" style="left:16.5px;top:291.3px;width:291.5px;height:22px;background:#33afc0;border-radius:11px;box-shadow:0 2px 3px rgba(0,0,0,0.22)"></div><div class="txt" style="left:133px;top:297px;font-size:11px;color:#fff;letter-spacing:0.2px">ADD PREP</div><div class="abs" style="left:13px;top:317px;width:299px;height:1px;background:#ececec"></div><div class="abs" style="left:22px;top:328.29999999999995px;width:4px;height:4px;background:#333;transform:rotate(45deg)"></div><div class="abs" style="left:18.4px;top:331.9px;width:4px;height:4px;background:#333;transform:rotate(45deg)"></div><div class="abs" style="left:25.6px;top:331.9px;width:4px;height:4px;background:#333;transform:rotate(45deg)"></div><div class="abs" style="left:22px;top:335.5px;width:4px;height:4px;background:#333;transform:rotate(45deg)"></div><div class="sel" style="left:34.8px;top:322px;width:254.5px;height:25px"></div><div class="txt" style="left:43.5px;top:329px;font-size:11px;color:#666">Change Case</div><svg class="ic" style="left:270px;top:332px;width:10px;height:5px" viewBox="0 0 10 5"><path d="M0.5 0h9l-4.5 5z" fill="#888"/></svg><svg class="ic" style="left:294px;top:326px;width:15px;height:15px" viewBox="0 0 24 24"><path fill="#3f3f3f" d="M6 19c0 1.1.9 2 2 2h8c1.1 0 2-.9 2-2V7H6v12zM19 4h-3.5l-1-1h-5l-1 1H5v2h14V4z"/></svg><div class="sel" style="left:18.5px;top:354px;width:286px;height:24.5px"></div><div class="txt" style="left:27px;top:361px;font-size:11px;color:#666">Lowercase</div><svg class="ic" style="left:285px;top:364px;width:10px;height:5px" viewBox="0 0 10 5"><path d="M0.5 0h9l-4.5 5z" fill="#888"/></svg><div class="abs" style="left:13px;top:388px;width:299px;height:1px;background:#e6e6e6"></div><div class="abs" style="left:22px;top:398.4px;width:4px;height:4px;background:#333;transform:rotate(45deg)"></div><div class="abs" style="left:18.4px;top:402px;width:4px;height:4px;background:#333;transform:rotate(45deg)"></div><div class="abs" style="left:25.6px;top:402px;width:4px;height:4px;background:#333;transform:rotate(45deg)"></div><div class="abs" style="left:22px;top:405.6px;width:4px;height:4px;background:#333;transform:rotate(45deg)"></div><svg class="ic" style="left:294px;top:397px;width:15px;height:15px" viewBox="0 0 24 24"><path fill="#3f3f3f" d="M6 19c0 1.1.9 2 2 2h8c1.1 0 2-.9 2-2V7H6v12zM19 4h-3.5l-1-1h-5l-1 1H5v2h14V4z"/></svg><div class="sel" style="left:18.5px;top:425px;width:286px;height:24.5px"></div><div class="txt" style="left:27px;top:432px;font-size:11px;color:#666">(not set)</div><div class="card" style="top:466px"><div class="vd" style="left:21px"></div><div class="vd" style="left:229px"></div><div class="vd" style="left:252px"></div><div class="vd" style="left:275px"></div><div class="fname">Users</div></div><svg class="ic" style="left:16.6px;top:469.8px;width:14.5px;height:14.5px" viewBox="0 0 24 24"><path fill="#3f3f3f" d="M12 4.5C7 4.5 2.73 7.61 1 12c1.73 4.39 6 7.5 11 7.5s9.27-3.11 11-7.5c-1.73-4.39-6-7.5-11-7.5zM12 17c-2.76 0-5-2.24-5-5s2.24-5 5-5 5 2.24 5 5-2.24 5-5 5zm0-8c-1.66 0-3 1.34-3 3s1.34 3 3 3 3-1.34 3-3-1.34-3-3-3z"/></svg><svg class="ic" style="left:247.3px;top:469.2px;width:15px;height:15px" viewBox="0 0 24 24"><path fill="#3f3f3f" d="M10 4v3h2.21l-3.42 8H6v3h8v-3h-2.21l3.42-8H18V4z"/></svg><svg class="ic" style="left:272px;top:470.5px;width:12px;height:13px" viewBox="0 0 12 13"><g fill="#3f3f3f"><rect x="0.1" y="2.3" width="7.4" height="1.4"/><rect x="7.6" y="1" width="1.7" height="4"/><rect x="9.3" y="2.3" width="2.5" height="1.4"/><rect x="0.1" y="5.9" width="2.1" height="1.4"/><rect x="2.3" y="4.6" width="1.8" height="4"/><rect x="5.2" y="5.9" width="6.6" height="1.4"/><rect x="0.1" y="9.4" width="3.8" height="1.4"/><rect x="5" y="8.1" width="1.9" height="4"/><rect x="6.9" y="9.4" width="4.9" height="1.4"/></g></svg><svg class="ic" style="left:293.45px;top:469.85px;width:15px;height:15px" viewBox="0 0 24 24"><path fill="#3f3f3f" d="M12 2C6.47 2 2 6.47 2 12s4.47 10 10 10 10-4.47 10-10S17.53 2 12 2zm5 13.59L15.59 17 12 13.41 8.41 17 7 15.59 10.59 12 7 8.41 8.41 7 12 10.59 15.59 7 17 8.41 13.41 12 17 15.59z"/></svg><div class="card" style="top:496.5px"><div class="vd" style="left:21px"></div><div class="vd" style="left:229px"></div><div class="vd" style="left:252px"></div><div class="vd" style="left:275px"></div><div class="fname">Sessions</div></div><svg class="ic" style="left:16.6px;top:500.3px;width:14.5px;height:14.5px" viewBox="0 0 24 24"><path fill="#3f3f3f" d="M12 4.5C7 4.5 2.73 7.61 1 12c1.73 4.39 6 7.5 11 7.5s9.27-3.11 11-7.5c-1.73-4.39-6-7.5-11-7.5zM12 17c-2.76 0-5-2.24-5-5s2.24-5 5-5 5 2.24 5 5-2.24 5-5 5zm0-8c-1.66 0-3 1.34-3 3s1.34 3 3 3 3-1.34 3-3-1.34-3-3-3z"/></svg><svg class="ic" style="left:247.3px;top:499.7px;width:15px;height:15px" viewBox="0 0 24 24"><path fill="#3f3f3f" d="M10 4v3h2.21l-3.42 8H6v3h8v-3h-2.21l3.42-8H18V4z"/></svg><svg class="ic" style="left:272px;top:501.0px;width:12px;height:13px" viewBox="0 0 12 13"><g fill="#3f3f3f"><rect x="0.1" y="2.3" width="7.4" height="1.4"/><rect x="7.6" y="1" width="1.7" height="4"/><rect x="9.3" y="2.3" width="2.5" height="1.4"/><rect x="0.1" y="5.9" width="2.1" height="1.4"/><rect x="2.3" y="4.6" width="1.8" height="4"/><rect x="5.2" y="5.9" width="6.6" height="1.4"/><rect x="0.1" y="9.4" width="3.8" height="1.4"/><rect x="5" y="8.1" width="1.9" height="4"/><rect x="6.9" y="9.4" width="4.9" height="1.4"/></g></svg><svg class="ic" style="left:293.45px;top:500.35px;width:15px;height:15px" viewBox="0 0 24 24"><path fill="#3f3f3f" d="M12 2C6.47 2 2 6.47 2 12s4.47 10 10 10 10-4.47 10-10S17.53 2 12 2zm5 13.59L15.59 17 12 13.41 8.41 17 7 15.59 10.59 12 7 8.41 8.41 7 12 10.59 15.59 7 17 8.41 13.41 12 17 15.59z"/></svg><div class="card" style="top:527px"><div class="vd" style="left:21px"></div><div class="vd" style="left:229px"></div><div class="vd" style="left:252px"></div><div class="vd" style="left:275px"></div><div class="fname">Bounces</div></div><svg class="ic" style="left:16.6px;top:530.8px;width:14.5px;height:14.5px" viewBox="0 0 24 24"><path fill="#3f3f3f" d="M12 4.5C7 4.5 2.73 7.61 1 12c1.73 4.39 6 7.5 11 7.5s9.27-3.11 11-7.5c-1.73-4.39-6-7.5-11-7.5zM12 17c-2.76 0-5-2.24-5-5s2.24-5 5-5 5 2.24 5 5-2.24 5-5 5zm0-8c-1.66 0-3 1.34-3 3s1.34 3 3 3 3-1.34 3-3-1.34-3-3-3z"/></svg><svg class="ic" style="left:247.3px;top:530.2px;width:15px;height:15px" viewBox="0 0 24 24"><path fill="#3f3f3f" d="M10 4v3h2.21l-3.42 8H6v3h8v-3h-2.21l3.42-8H18V4z"/></svg><svg class="ic" style="left:272px;top:531.5px;width:12px;height:13px" viewBox="0 0 12 13"><g fill="#3f3f3f"><rect x="0.1" y="2.3" width="7.4" height="1.4"/><rect x="7.6" y="1" width="1.7" height="4"/><rect x="9.3" y="2.3" width="2.5" height="1.4"/><rect x="0.1" y="5.9" width="2.1" height="1.4"/><rect x="2.3" y="4.6" width="1.8" height="4"/><rect x="5.2" y="5.9" width="6.6" height="1.4"/><rect x="0.1" y="9.4" width="3.8" height="1.4"/><rect x="5" y="8.1" width="1.9" height="4"/><rect x="6.9" y="9.4" width="4.9" height="1.4"/></g></svg><svg class="ic" style="left:293.45px;top:530.85px;width:15px;height:15px" viewBox="0 0 24 24"><path fill="#3f3f3f" d="M12 2C6.47 2 2 6.47 2 12s4.47 10 10 10 10-4.47 10-10S17.53 2 12 2zm5 13.59L15.59 17 12 13.41 8.41 17 7 15.59 10.59 12 7 8.41 8.41 7 12 10.59 15.59 7 17 8.41 13.41 12 17 15.59z"/></svg><div class="card" style="top:557.5px"><div class="vd" style="left:21px"></div><div class="vd" style="left:229px"></div><div class="vd" style="left:252px"></div><div class="vd" style="left:275px"></div><div class="fname">Entrances</div></div><svg class="ic" style="left:16.6px;top:561.3px;width:14.5px;height:14.5px" viewBox="0 0 24 24"><path fill="#3f3f3f" d="M12 4.5C7 4.5 2.73 7.61 1 12c1.73 4.39 6 7.5 11 7.5s9.27-3.11 11-7.5c-1.73-4.39-6-7.5-11-7.5zM12 17c-2.76 0-5-2.24-5-5s2.24-5 5-5 5 2.24 5 5-2.24 5-5 5zm0-8c-1.66 0-3 1.34-3 3s1.34 3 3 3 3-1.34 3-3-1.34-3-3-3z"/></svg><svg class="ic" style="left:247.3px;top:560.7px;width:15px;height:15px" viewBox="0 0 24 24"><path fill="#3f3f3f" d="M10 4v3h2.21l-3.42 8H6v3h8v-3h-2.21l3.42-8H18V4z"/></svg><svg class="ic" style="left:272px;top:562.0px;width:12px;height:13px" viewBox="0 0 12 13"><g fill="#3f3f3f"><rect x="0.1" y="2.3" width="7.4" height="1.4"/><rect x="7.6" y="1" width="1.7" height="4"/><rect x="9.3" y="2.3" width="2.5" height="1.4"/><rect x="0.1" y="5.9" width="2.1" height="1.4"/><rect x="2.3" y="4.6" width="1.8" height="4"/><rect x="5.2" y="5.9" width="6.6" height="1.4"/><rect x="0.1" y="9.4" width="3.8" height="1.4"/><rect x="5" y="8.1" width="1.9" height="4"/><rect x="6.9" y="9.4" width="4.9" height="1.4"/></g></svg><svg class="ic" style="left:293.45px;top:561.35px;width:15px;height:15px" viewBox="0 0 24 24"><path fill="#3f3f3f" d="M12 2C6.47 2 2 6.47 2 12s4.47 10 10 10 10-4.47 10-10S17.53 2 12 2zm5 13.59L15.59 17 12 13.41 8.41 17 7 15.59 10.59 12 7 8.41 8.41 7 12 10.59 15.59 7 17 8.41 13.41 12 17 15.59z"/></svg><div class="card" style="top:589px"><div class="vd" style="left:21px"></div><div class="vd" style="left:229px"></div><div class="vd" style="left:252px"></div><div class="vd" style="left:275px"></div><div class="fname">Pageviews</div></div><svg class="ic" style="left:16.6px;top:592.8px;width:14.5px;height:14.5px" viewBox="0 0 24 24"><path fill="#3f3f3f" d="M12 4.5C7 4.5 2.73 7.61 1 12c1.73 4.39 6 7.5 11 7.5s9.27-3.11 11-7.5c-1.73-4.39-6-7.5-11-7.5zM12 17c-2.76 0-5-2.24-5-5s2.24-5 5-5 5 2.24 5 5-2.24 5-5 5zm0-8c-1.66 0-3 1.34-3 3s1.34 3 3 3 3-1.34 3-3-1.34-3-3-3z"/></svg><svg class="ic" style="left:247.3px;top:592.2px;width:15px;height:15px" viewBox="0 0 24 24"><path fill="#3f3f3f" d="M10 4v3h2.21l-3.42 8H6v3h8v-3h-2.21l3.42-8H18V4z"/></svg><svg class="ic" style="left:272px;top:593.5px;width:12px;height:13px" viewBox="0 0 12 13"><g fill="#3f3f3f"><rect x="0.1" y="2.3" width="7.4" height="1.4"/><rect x="7.6" y="1" width="1.7" height="4"/><rect x="9.3" y="2.3" width="2.5" height="1.4"/><rect x="0.1" y="5.9" width="2.1" height="1.4"/><rect x="2.3" y="4.6" width="1.8" height="4"/><rect x="5.2" y="5.9" width="6.6" height="1.4"/><rect x="0.1" y="9.4" width="3.8" height="1.4"/><rect x="5" y="8.1" width="1.9" height="4"/><rect x="6.9" y="9.4" width="4.9" height="1.4"/></g></svg><svg class="ic" style="left:293.45px;top:592.85px;width:15px;height:15px" viewBox="0 0 24 24"><path fill="#3f3f3f" d="M12 2C6.47 2 2 6.47 2 12s4.47 10 10 10 10-4.47 10-10S17.53 2 12 2zm5 13.59L15.59 17 12 13.41 8.41 17 7 15.59 10.59 12 7 8.41 8.41 7 12 10.59 15.59 7 17 8.41 13.41 12 17 15.59z"/></svg><div class="abs" style="left:34.8px;top:392.2px;width:255px;height:187px;background:#fff;border:1px solid #5ec1cd;border-radius:13px 13px 13px 13px;overflow:hidden"><div class="abs" style="left:0;top:0;width:254px;height:24px;background:#f9f9f9"></div></div><svg class="ic" style="left:270px;top:402px;width:10px;height:5px" viewBox="0 0 10 5"><path d="M0.5 5h9l-4.5 -5z" fill="#888"/></svg><div class="dd" style="left:43.5px;top:423.0px">Average</div><div class="dd" style="left:43.5px;top:446.52px">Sum</div><div class="dd" style="left:43.5px;top:470.04px">Delta Change</div><div class="dd" style="left:43.5px;top:493.56px">Round</div><div class="dd" style="left:43.5px;top:517.08px">If Empty</div><div class="abs" style="left:36.5px;top:533.7px;width:245.5px;height:23px;background:#33b0c1"></div><div class="dd" style="left:43.5px;top:540.6px;color:#fff;font-weight:bold">Find and Replace</div><div class="dd" style="left:43.5px;top:564.12px">Replace (Exact List)</div><div class="abs" style="left:283px;top:417px;width:6px;height:150px;background:#f9f9f9"></div><div class="abs" style="left:283px;top:566px;width:8px;height:14px;background:#f9f9f9"></div><div class="abs" style="left:282.5px;top:450.5px;width:6px;height:44px;background:#d0d0d0;border-radius:3px"></div><div class="abs" style="left:332px;top:113.8px;width:864px;height:1px;background:#a9a9a9"></div><div class="cb" style="top:95.5px"></div><div class="hcell" style="left:369px">Date</div><div class="hcell" style="left:432.5px">Campaign</div><div class="hcell" style="left:516px">Source</div><div class="hcell" style="left:656.3px">Medium</div><div class="hcell" style="left:712.5px">Source / Medium</div><div class="hcell" style="left:894px">Keyword</div><div class="hcell" style="right:176px">Users</div><div class="hcell" style="right:117.5px">Sessions</div><div class="hcell" style="right:48.5px">Pageviews</div><svg class="ic" style="left:419.0px;top:108.5px;width:6px;height:6px" viewBox="0 0 6 6"><path d="M0.3 5.8 L5 0.8 M2.6 5.8 L5.8 2.6" stroke="#9a9a9a" stroke-width="0.85" fill="none"/></svg><svg class="ic" style="left:502.8px;top:108.5px;width:6px;height:6px" viewBox="0 0 6 6"><path d="M0.3 5.8 L5 0.8 M2.6 5.8 L5.8 2.6" stroke="#9a9a9a" stroke-width="0.85" fill="none"/></svg><svg class="ic" style="left:643.1px;top:108.5px;width:6px;height:6px" viewBox="0 0 6 6"><path d="M0.3 5.8 L5 0.8 M2.6 5.8 L5.8 2.6" stroke="#9a9a9a" stroke-width="0.85" fill="none"/></svg><svg class="ic" style="left:699.8px;top:108.5px;width:6px;height:6px" viewBox="0 0 6 6"><path d="M0.3 5.8 L5 0.8 M2.6 5.8 L5.8 2.6" stroke="#9a9a9a" stroke-width="0.85" fill="none"/></svg><svg class="ic" style="left:880.3px;top:108.5px;width:6px;height:6px" viewBox="0 0 6 6"><path d="M0.3 5.8 L5 0.8 M2.6 5.8 L5.8 2.6" stroke="#9a9a9a" stroke-width="0.85" fill="none"/></svg><svg class="ic" style="left:993.7px;top:108.5px;width:6px;height:6px" viewBox="0 0 6 6"><path d="M0.3 5.8 L5 0.8 M2.6 5.8 L5.8 2.6" stroke="#9a9a9a" stroke-width="0.85" fill="none"/></svg><svg class="ic" style="left:1035.9px;top:108.5px;width:6px;height:6px" viewBox="0 0 6 6"><path d="M0.3 5.8 L5 0.8 M2.6 5.8 L5.8 2.6" stroke="#9a9a9a" stroke-width="0.85" fill="none"/></svg><svg class="ic" style="left:1093.5px;top:108.5px;width:6px;height:6px" viewBox="0 0 6 6"><path d="M0.3 5.8 L5 0.8 M2.6 5.8 L5.8 2.6" stroke="#9a9a9a" stroke-width="0.85" fill="none"/></svg><svg class="ic" style="left:1163.8px;top:108.5px;width:6px;height:6px" viewBox="0 0 6 6"><path d="M0.3 5.8 L5 0.8 M2.6 5.8 L5.8 2.6" stroke="#9a9a9a" stroke-width="0.85" fill="none"/></svg><div class="row s" style="top:115.40px"></div><div class="cb" style="top:123.30px"></div><div class="cell" style="left:369px;top:124.10px">2020-09-22</div><div class="cell" style="left:432.5px;top:124.10px">organic</div><div class="cell" style="left:516px;top:124.10px">sogou</div><div class="cell" style="left:656.3px;top:124.10px">organic</div><div class="cell" style="left:712.5px;top:124.10px">sogou / organic</div><div class="cell" style="left:894px;top:124.10px">site:www.minitab.com</div><div class="cell" style="right:177px;top:124.10px">1</div><div class="cell" style="right:119px;top:124.10px">1</div><div class="cell" style="right:49px;top:124.10px">1</div><div class="row" style="top:142.93px"></div><div class="cb" style="top:150.83px"></div><div class="cell" style="left:369px;top:151.63px">2020-09-22</div><div class="cell" style="left:432.5px;top:151.63px">organic</div><div class="cell" style="left:516px;top:151.63px">mainsail.lightning.force.com</div><div class="cell" style="left:656.3px;top:151.63px">referral</div><div class="cell" style="left:712.5px;top:151.63px">mainsail.lightning.force.com / referral</div><div class="cell" style="left:894px;top:151.63px">(not set)</div><div class="cell" style="right:177px;top:151.63px">1</div><div class="cell" style="right:119px;top:151.63px">1</div><div class="cell" style="right:49px;top:151.63px">1</div><div class="row s" style="top:170.46px"></div><div class="cb" style="top:178.36px"></div><div class="cell" style="left:369px;top:179.16px">2020-09-22</div><div class="cell" style="left:432.5px;top:179.16px">organic</div><div class="cell" style="left:516px;top:179.16px">google</div><div class="cell" style="left:656.3px;top:179.16px">organic</div><div class="cell" style="left:712.5px;top:179.16px">google / organic</div><div class="cell" style="left:894px;top:179.16px">(not provided)</div><div class="cell" style="right:177px;top:179.16px">11</div><div class="cell" style="right:119px;top:179.16px">11</div><div class="cell" style="right:49px;top:179.16px">23</div><div class="row" style="top:197.99px"></div><div class="cb" style="top:205.89px"></div><div class="cell" style="left:369px;top:206.69px">2020-09-22</div><div class="cell" style="left:432.5px;top:206.69px">organic</div><div class="cell" style="left:516px;top:206.69px">facebook.com</div><div class="cell" style="left:656.3px;top:206.69px">referral</div><div class="cell" style="left:712.5px;top:206.69px">facebook.com / referral</div><div class="cell" style="left:894px;top:206.69px">(not set)</div><div class="cell" style="right:177px;top:206.69px">1</div><div class="cell" style="right:119px;top:206.69px">1</div><div class="cell" style="right:49px;top:206.69px">1</div><div class="row s" style="top:225.52px"></div><div class="cb" style="top:233.42px"></div><div class="cell" style="left:369px;top:234.22px">2020-09-22</div><div class="cell" style="left:432.5px;top:234.22px">organic</div><div class="cell" style="left:516px;top:234.22px">bing</div><div class="cell" style="left:656.3px;top:234.22px">organic</div><div class="cell" style="left:712.5px;top:234.22px">bing / organic</div><div class="cell" style="left:894px;top:234.22px">minitab data</div><div class="cell" style="right:177px;top:234.22px">1</div><div class="cell" style="right:119px;top:234.22px">2</div><div class="cell" style="right:49px;top:234.22px">14</div><div class="row" style="top:253.05px"></div><div class="cb" style="top:260.95px"></div><div class="cell" style="left:369px;top:261.75px">2020-09-22</div><div class="cell" style="left:432.5px;top:261.75px">organic</div><div class="cell" style="left:516px;top:261.75px">analytics.google.com</div><div class="cell" style="left:656.3px;top:261.75px">referral</div><div class="cell" style="left:712.5px;top:261.75px">analytics.google.com / referral</div><div class="cell" style="left:894px;top:261.75px">(not set)</div><div class="cell" style="right:177px;top:261.75px">1</div><div class="cell" style="right:119px;top:261.75px">2</div><div class="cell" style="right:49px;top:261.75px">8</div><div class="row s" style="top:280.58px"></div><div class="cb" style="top:288.48px"></div><div class="cell" style="left:369px;top:289.28px">2020-09-22</div><div class="cell" style="left:432.5px;top:289.28px">organic</div><div class="cell" style="left:516px;top:289.28px">organic</div><div class="cell" style="left:656.3px;top:289.28px">organic</div><div class="cell" style="left:712.5px;top:289.28px">organic / organic</div><div class="cell" style="left:894px;top:289.28px">(not set)</div><div class="cell" style="right:177px;top:289.28px">8</div><div class="cell" style="right:119px;top:289.28px">8</div><div class="cell" style="right:49px;top:289.28px">12</div><div class="row" style="top:308.11px"></div><div class="cb" style="top:316.01px"></div><div class="cell" style="left:369px;top:316.81px">2020-09-21</div><div class="cell" style="left:432.5px;top:316.81px">organic</div><div class="cell" style="left:516px;top:316.81px">sogou</div><div class="cell" style="left:656.3px;top:316.81px">organic</div><div class="cell" style="left:712.5px;top:316.81px">sogou / organic</div><div class="cell" style="left:894px;top:316.81px">site:minitab.com</div><div class="cell" style="right:177px;top:316.81px">1</div><div class="cell" style="right:119px;top:316.81px">1</div><div class="cell" style="right:49px;top:316.81px">1</div><div class="row s" style="top:335.64px"></div><div class="cb" style="top:343.54px"></div><div class="cell" style="left:369px;top:344.34px">2020-09-21</div><div class="cell" style="left:432.5px;top:344.34px">organic</div><div class="cell" style="left:516px;top:344.34px">no.search.yahoo.com</div><div class="cell" style="left:656.3px;top:344.34px">referral</div><div class="cell" style="left:712.5px;top:344.34px">no.search.yahoo.com / referral</div><div class="cell" style="left:894px;top:344.34px">(not set)</div><div class="cell" style="right:177px;top:344.34px">1</div><div class="cell" style="right:119px;top:344.34px">1</div><div class="cell" style="right:49px;top:344.34px">2</div><div class="row" style="top:363.17px"></div><div class="cb" style="top:371.07px"></div><div class="cell" style="left:369px;top:371.87px">2020-09-21</div><div class="cell" style="left:432.5px;top:371.87px">organic</div><div class="cell" style="left:516px;top:371.87px">platform referral</div><div class="cell" style="left:656.3px;top:371.87px">referral</div><div class="cell" style="left:712.5px;top:371.87px">my / referral</div><div class="cell" style="left:894px;top:371.87px">(not set)</div><div class="cell" style="right:177px;top:371.87px">1</div><div class="cell" style="right:119px;top:371.87px">1</div><div class="cell" style="right:49px;top:371.87px">2</div><div class="row s" style="top:390.70px"></div><div class="cb" style="top:398.60px"></div><div class="cell" style="left:369px;top:399.40px">2020-09-21</div><div class="cell" style="left:432.5px;top:399.40px">organic</div><div class="cell" style="left:516px;top:399.40px">google</div><div class="cell" style="left:656.3px;top:399.40px">organic</div><div class="cell" style="left:712.5px;top:399.40px">google / organic</div><div class="cell" style="left:894px;top:399.40px">(not provided)</div><div class="cell" style="right:177px;top:399.40px">14</div><div class="cell" style="right:119px;top:399.40px">14</div><div class="cell" style="right:49px;top:399.40px">34</div><div class="row" style="top:418.23px"></div><div class="cb" style="top:426.13px"></div><div class="cell" style="left:369px;top:426.93px">2020-09-21</div><div class="cell" style="left:432.5px;top:426.93px">organic</div><div class="cell" style="left:516px;top:426.93px">bing</div><div class="cell" style="left:656.3px;top:426.93px">organic</div><div class="cell" style="left:712.5px;top:426.93px">bing / organic</div><div class="cell" style="left:894px;top:426.93px">minitab data</div><div class="cell" style="right:177px;top:426.93px">2</div><div class="cell" style="right:119px;top:426.93px">2</div><div class="cell" style="right:49px;top:426.93px">2</div><div class="row s" style="top:445.76px"></div><div class="cb" style="top:453.66px"></div><div class="cell" style="left:369px;top:454.46px">2020-09-21</div><div class="cell" style="left:432.5px;top:454.46px">organic</div><div class="cell" style="left:516px;top:454.46px">baidu</div><div class="cell" style="left:656.3px;top:454.46px">organic</div><div class="cell" style="left:712.5px;top:454.46px">baidu / organic</div><div class="cell" style="left:894px;top:454.46px">(not provided)</div><div class="cell" style="right:177px;top:454.46px">1</div><div class="cell" style="right:119px;top:454.46px">1</div><div class="cell" style="right:49px;top:454.46px">1</div><div class="row" style="top:473.29px"></div><div class="cb" style="top:481.19px"></div><div class="cell" style="left:369px;top:481.99px">2020-09-21</div><div class="cell" style="left:432.5px;top:481.99px">organic</div><div class="cell" style="left:516px;top:481.99px">analytics.google.com</div><div class="cell" style="left:656.3px;top:481.99px">referral</div><div class="cell" style="left:712.5px;top:481.99px">analytics.google.com / referral</div><div class="cell" style="left:894px;top:481.99px">(not set)</div><div class="cell" style="right:177px;top:481.99px">1</div><div class="cell" style="right:119px;top:481.99px">1</div><div class="cell" style="right:49px;top:481.99px">5</div><div class="row s" style="top:500.82px"></div><div class="cb" style="top:508.72px"></div><div class="cell" style="left:369px;top:509.52px">2020-09-21</div><div class="cell" style="left:432.5px;top:509.52px">organic</div><div class="cell" style="left:516px;top:509.52px">organic</div><div class="cell" style="left:656.3px;top:509.52px">organic</div><div class="cell" style="left:712.5px;top:509.52px">organic / organic</div><div class="cell" style="left:894px;top:509.52px">(not set)</div><div class="cell" style="right:177px;top:509.52px">10</div><div class="cell" style="right:119px;top:509.52px">11</div><div class="cell" style="right:49px;top:509.52px">17</div><div class="row" style="top:528.35px"></div><div class="cb" style="top:536.25px"></div><div class="cell" style="left:369px;top:537.05px">2020-09-20</div><div class="cell" style="left:432.5px;top:537.05px">survey research</div><div class="cell" style="left:516px;top:537.05px">DAA</div><div class="cell" style="left:656.3px;top:537.05px">other</div><div class="cell" style="left:712.5px;top:537.05px">daa / other</div><div class="cell" style="left:894px;top:537.05px">(not set)</div><div class="cell" style="right:177px;top:537.05px">1</div><div class="cell" style="right:119px;top:537.05px">1</div><div class="cell" style="right:49px;top:537.05px">2</div><div class="row s" style="top:555.88px"></div><div class="cb" style="top:563.78px"></div><div class="cell" style="left:369px;top:564.58px">2020-09-20</div><div class="cell" style="left:432.5px;top:564.58px">organic</div><div class="cell" style="left:516px;top:564.58px">google</div><div class="cell" style="left:656.3px;top:564.58px">organic</div><div class="cell" style="left:712.5px;top:564.58px">google / organic</div><div class="cell" style="left:894px;top:564.58px">(not provided)</div><div class="cell" style="right:177px;top:564.58px">1</div><div class="cell" style="right:119px;top:564.58px">1</div><div class="cell" style="right:49px;top:564.58px">2</div><div class="row" style="top:583.41px"></div><div class="cb" style="top:591.31px"></div><div class="cell" style="left:369px;top:592.11px">2020-09-20</div><div class="cell" style="left:432.5px;top:592.11px">organic</div><div class="cell" style="left:516px;top:592.11px">organic</div><div class="cell" style="left:656.3px;top:592.11px">organic</div><div class="cell" style="left:712.5px;top:592.11px">organic / organic</div><div class="cell" style="left:894px;top:592.11px">(not set)</div><div class="cell" style="right:177px;top:592.11px">8</div><div class="cell" style="right:119px;top:592.11px">8</div><div class="cell" style="right:49px;top:592.11px">9</div><div class="row s" style="top:610.94px"></div><div class="cb" style="top:618.84px"></div><div class="cell" style="left:369px;top:619.64px">2020-09-19</div><div class="cell" style="left:432.5px;top:619.64px">organic</div><div class="cell" style="left:516px;top:619.64px">platform referral</div><div class="cell" style="left:656.3px;top:619.64px">referral</div><div class="cell" style="left:712.5px;top:619.64px">my / referral</div><div class="cell" style="left:894px;top:619.64px">(not set)</div><div class="cell" style="right:177px;top:619.64px">1</div><div class="cell" style="right:119px;top:619.64px">2</div><div class="cell" style="right:49px;top:619.64px">5</div><div class="abs" style="left:1196.5px;top:88px;width:7px;height:541.5px;background:#f8f8f8;border-radius:3.5px"></div><div class="abs" style="left:1196.5px;top:88px;width:7px;height:209px;background:#d4d4d4;border-radius:3.5px"></div><div class="abs" style="left:332px;top:630px;width:864px;height:7px;background:#f8f8f8;border-radius:3.5px"></div><div class="abs" style="left:332px;top:630px;width:814px;height:7px;background:#d4d4d4;border-radius:3.5px"></div><div class="txt" style="left:1003.5px;top:650.5px;font-size:10.5px;color:#5cbdca">1 - 50 of 4,021 record(s)</div><svg class="ic" style="left:1121.5px;top:648px;width:16px;height:16px" viewBox="0 0 24 24"><path fill="#33b0c1" d="M7.41 8.59L12 13.17l4.59-4.58L18 10l-6 6-6-6 1.41-1.41z"/></svg><svg class="ic" style="left:1146.5px;top:646px;width:20px;height:20px" viewBox="0 0 24 24"><path fill="#d4d4d4" d="M15.41 7.41L14 6l-6 6 6 6 1.41-1.41L10.83 12z"/></svg><svg class="ic" style="left:1176px;top:646px;width:20px;height:20px" viewBox="0 0 24 24"><path fill="#33b0c1" d="M10 6L8.59 7.41 13.17 12l-4.58 4.59L10 18l6-6z"/></svg></body></html>
